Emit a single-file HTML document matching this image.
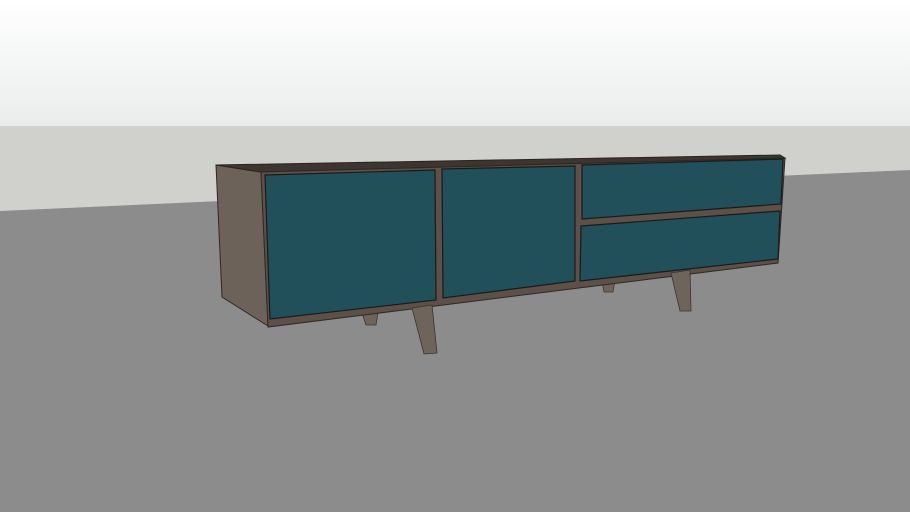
<!DOCTYPE html>
<html><head><style>html,body{margin:0;padding:0;width:910px;height:512px;overflow:hidden;background:#8c8c8c}</style></head>
<body>
<svg width="910" height="512" viewBox="0 0 910 512" xmlns="http://www.w3.org/2000/svg">
<defs>
<linearGradient id="sky" x1="0" y1="0" x2="0" y2="1">
<stop offset="0" stop-color="#ffffff"/><stop offset="1" stop-color="#eaecec"/>
</linearGradient>
</defs>
<rect x="0" y="0" width="910" height="127" fill="url(#sky)"/>
<rect x="0" y="126" width="910" height="100" fill="#d0d0cd"/>
<polygon points="0,211 910,170 910,512 0,512" fill="#8c8c8c"/>
<!-- legs back -->
<polygon points="362,313 378,312 376,325 366,325" fill="#6f645c" stroke="#3a332e" stroke-width="0.8"/>
<polygon points="602,281 615,280 613,292 604,292" fill="#6f645c" stroke="#3a332e" stroke-width="0.8"/>
<!-- side -->
<polygon points="216,165 261,172 268,326 222,297" fill="#6d625a" stroke="#2e2824" stroke-width="1"/>
<!-- top -->
<polygon points="216,165 780,155 785,158 261,172" fill="#3e3530" stroke="#2a2420" stroke-width="1"/>
<!-- front -->
<polygon points="261,172 785,158 778,263 268,327" fill="#5c5049" stroke="#2e2824" stroke-width="1"/>
<!-- doors -->
<g fill="#22505a" stroke="#1a1a1a" stroke-width="1.2">
<polygon points="265,175 435,170 436,300 270,319"/>
<polygon points="442,169 575,166 575,281 443,298"/>
<polygon points="582,165 783,159 781,204 582,219"/>
<polygon points="581,226 780,211 778,259 580,281"/>
</g>
<!-- front legs -->
<polygon points="412,308 432,305 437,353 424,354" fill="#6f645c" stroke="#3a332e" stroke-width="0.8"/>
<polygon points="671,273 690,270 691,311 680,311" fill="#6f645c" stroke="#3a332e" stroke-width="0.8"/>
</svg>
</body></html>
